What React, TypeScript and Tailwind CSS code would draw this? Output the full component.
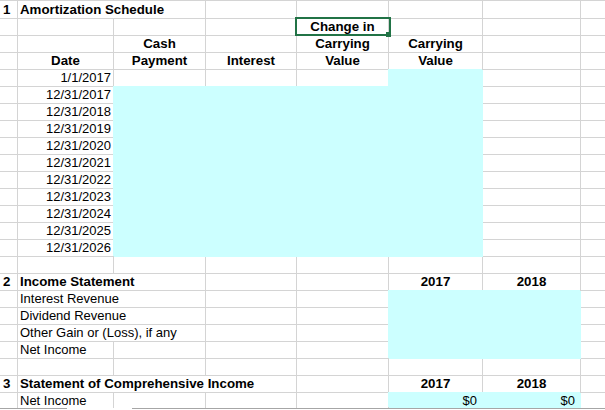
type Cell = {
  t?: string;
  s?: 1 | 2 | 3;
  a?: "l" | "c" | "r";
  b?: boolean;
  cy?: boolean;
  sel?: boolean;
  pad?: string;
};

const spanCls = { 1: "", 2: "col-span-2", 3: "col-span-3" };
const alignCls = {
  l: "justify-start pl-[2px]",
  c: "justify-center",
  r: "justify-end pr-[2px]",
};

const e: Cell = {};
const cyan: Cell = { cy: true };
const num = (n: string): Cell => ({ t: n, b: true, a: "l", pad: "pl-[3px]" });
const hd = (t: string): Cell => ({ t, b: true, a: "c" });

const dates = [
  "12/31/2017",
  "12/31/2018",
  "12/31/2019",
  "12/31/2020",
  "12/31/2021",
  "12/31/2022",
  "12/31/2023",
  "12/31/2024",
  "12/31/2025",
  "12/31/2026",
];

const blank = (): Cell[] => [e, e, e, e, e, e, e, e];

const rows: Cell[][] = [
  [num("1"), { t: "Amortization Schedule", s: 2, b: true, a: "l" }, e, e, e, e, e],
  [e, e, e, e, { ...hd("Change in"), sel: true }, e, e, e],
  [e, e, hd("Cash"), e, hd("Carrying"), hd("Carrying"), e, e],
  [e, hd("Date"), hd("Payment"), hd("Interest"), hd("Value"), hd("Value"), e, e],
  [e, { t: "1/1/2017", a: "r" }, e, e, e, cyan, e, e],
  ...dates.map((d) => [e, { t: d, a: "r" } as Cell, cyan, cyan, cyan, cyan, e, e]),
  blank(),
  [num("2"), { t: "Income Statement", s: 2, b: true, a: "l" }, e, e, hd("2017"), hd("2018"), e],
  [e, { t: "Interest Revenue", s: 2, a: "l" }, e, e, cyan, cyan, e],
  [e, { t: "Dividend Revenue", s: 2, a: "l" }, e, e, cyan, cyan, e],
  [e, { t: "Other Gain or (Loss), if any", s: 2, a: "l" }, e, e, cyan, cyan, e],
  [e, { t: "Net Income", a: "l" }, e, e, e, cyan, cyan, e],
  blank(),
  [num("3"), { t: "Statement of Comprehensive Income", s: 3, b: true, a: "l" }, e, hd("2017"), hd("2018"), e],
  [e, { t: "Net Income", a: "l" }, e, e, e, { ...cyan, t: "$0", a: "r", pad: "pr-[5px]" }, { ...cyan, t: "$0", a: "r", pad: "pr-[5px]" }, e],
];

function Row({ cells, h, bottom }: { cells: Cell[]; h: string; bottom: boolean }) {
  return (
    <div className="grid grid-cols-[18px_96px_92px_91px_92px_94px_98px_24px]">
      {cells.map((c, i) => {
        const lastCol = i === cells.length - 1;
        const color = c.cy
          ? "bg-[#ccffff] border-[#ccffff] shadow-[-1px_-1px_0_#ccffff]"
          : "border-[#d4d4d4]";
        return (
          <div
            key={i}
            className={[
              "relative flex items-start whitespace-nowrap leading-[16px]",
              h,
              spanCls[c.s ?? 1],
              color,
              lastCol ? "" : "border-r",
              bottom ? "border-b" : "",
              c.a ? alignCls[c.a] : "",
              c.pad ?? "",
              c.b ? "font-bold text-[13.3px]" : "",
            ].join(" ")}
          >
            {c.t}
            {c.sel && (
              <>
                <div className="absolute -left-[2px] -top-[2px] w-[96px] h-[19px] border-2 border-[#217346] z-10" />
                <div className="absolute left-[89px] top-[13px] w-[5px] h-[5px] bg-[#217346] z-10" />
              </>
            )}
          </div>
        );
      })}
    </div>
  );
}

export default function App() {
  return (
    <div className="w-[605px] h-[410px] overflow-hidden bg-white text-black text-[13px] font-['Liberation_Sans',Arial,sans-serif]">
      <div className="border-t border-[#d4d4d4]">
        {rows.map((cells, i) => (
          <Row
            key={i}
            cells={cells}
            h={i === 0 ? "h-[18px] pt-px" : i === rows.length - 1 ? "h-[15px]" : "h-[17px]"}
            bottom={i !== rows.length - 1}
          />
        ))}
      </div>
      <div className="flex h-px">
        <div className="w-[67px] bg-[#a6a6a6]" />
        <div className="w-[65px]" />
        <div className="flex-1 bg-[#a6a6a6]" />
      </div>
    </div>
  );
}
